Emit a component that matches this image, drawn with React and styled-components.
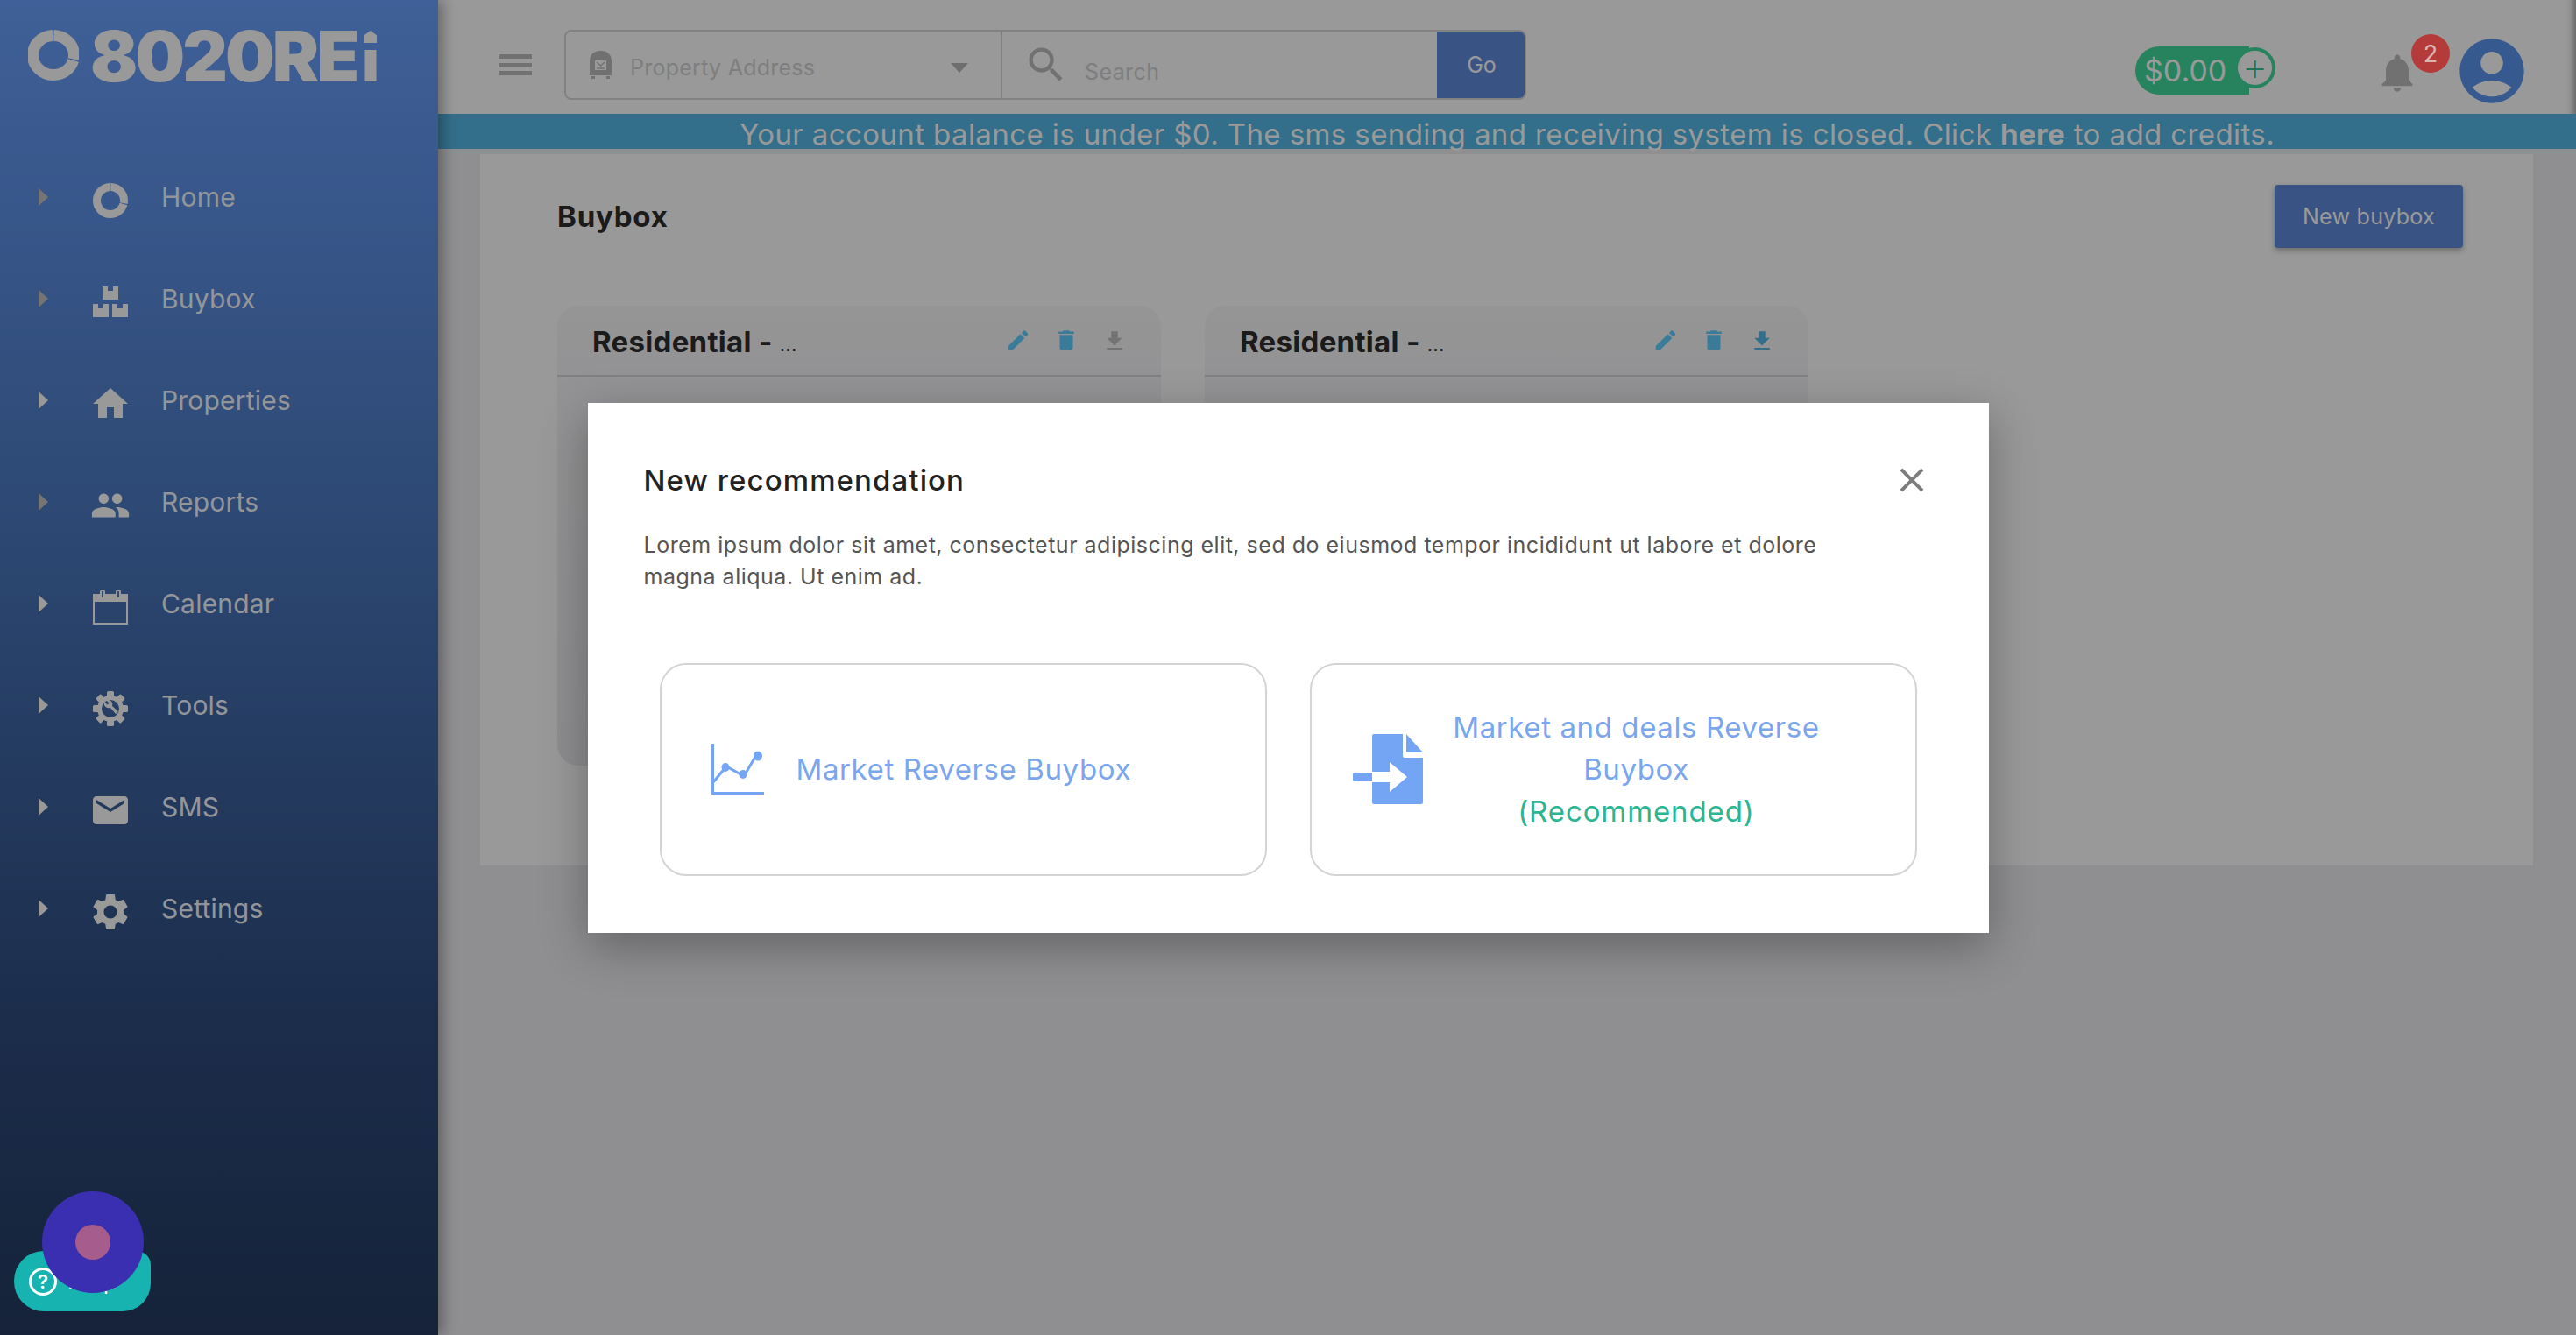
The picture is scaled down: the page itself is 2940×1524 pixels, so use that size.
import React from "react";
import styled, { createGlobalStyle } from "styled-components";
import {
  MdHome, MdPeople, MdEmail, MdSettings, MdEdit, MdDelete, MdFileDownload,
  MdSearch, MdNotifications, MdClose, MdAccountCircle,
} from "react-icons/md";

const FONT = `"Inter", "Noto Sans", "Liberation Sans", sans-serif`;

const Global = createGlobalStyle`
  html, body { margin: 0; padding: 0; height: 100%; overflow: hidden; }
  body { font-family: ${FONT}; background: #eeeef3; }
  * { box-sizing: border-box; }
`;

const Page = styled.div`
  display: flex;
  width: 2940px;
  height: 1524px;
  overflow: hidden;
  position: relative;
`;

const Sidebar = styled.aside`
  flex: 0 0 500px;
  display: flex;
  flex-direction: column;
  background: linear-gradient(180deg, #6aa0fe 0%, #4a78bf 40%, #2f4d80 75%, #243a60 100%);
  box-shadow: 6px 0 14px rgba(0, 0, 0, 0.3);
  position: relative;
  z-index: 2;
`;

const LogoRow = styled.div`
  height: 167px;
  padding: 33px 0 0 32px;
  display: flex;
  align-items: flex-start;
  gap: 13px;
  color: #fff;
`;

const LogoMark = styled.svg`
  width: 58px;
  height: 60px;
  flex: none;
`;

const LogoWord = styled.div`
  font-family: ${FONT};
  font-weight: 900;
  font-size: 80px;
  line-height: 60px;
  letter-spacing: -3px;
  white-space: nowrap;
  height: 60px;
  margin-top: 1px;
  display: flex;
  align-items: baseline;
`;

const LogoI = styled.span`
  position: relative;
  margin-left: 6px;
  font-size: 66px;
  &::before {
    content: "";
    position: absolute;
    left: 2px;
    top: -4px;
    width: 15px;
    height: 14px;
    background: #fff;
    clip-path: polygon(50% 0, 100% 40%, 100% 100%, 0 100%, 0 40%);
  }
`;

const Nav = styled.nav`
  display: flex;
  flex-direction: column;
`;

const NavRow = styled.div`
  height: 116px;
  display: flex;
  align-items: center;
  padding-left: 44px;
  color: #fff;
`;

const Arrow = styled.span`
  width: 0;
  height: 0;
  border-style: solid;
  border-width: 10px 0 10px 11px;
  border-color: transparent transparent transparent ${(p) => (p.$dim ? "#c4c4c4" : "#ffffff")};
  margin-right: 51px;
  flex: none;
`;

const NavIcon = styled.span`
  width: 40px;
  height: 40px;
  margin-top: 8px;
  margin-right: 38px;
  flex: none;
  display: flex;
  align-items: center;
  justify-content: center;
  & svg { display: block; overflow: visible; flex: none; }
`;

const NavLabel = styled.span`
  font-size: 30px;
  font-weight: 400;
  color: #f6f8ff;
  letter-spacing: 0.2px;
`;

const HelpPill = styled.div`
  position: absolute;
  left: 16px;
  top: 1428px;
  width: 156px;
  height: 69px;
  background: #17b3b0;
  border-radius: 34px 16px 32px 34px;
  z-index: 50;
  display: flex;
  align-items: center;
  padding-left: 17px;
  gap: 12px;
  color: #fff;
  font-size: 26px;
`;

const HelpIcon = styled.span`
  width: 32px;
  height: 32px;
  border: 3px solid #fff;
  border-radius: 50%;
  display: flex;
  align-items: center;
  justify-content: center;
  font-size: 22px;
  font-weight: 600;
  line-height: 1;
`;

const Recorder = styled.div`
  position: absolute;
  left: 48px;
  top: 1360px;
  width: 116px;
  height: 116px;
  border-radius: 50%;
  background: #3a2fb0;
  z-index: 51;
  display: flex;
  align-items: center;
  justify-content: center;
  &::after {
    content: "";
    width: 40px;
    height: 40px;
    border-radius: 50%;
    background: #a65c8c;
  }
`;

const Main = styled.main`
  flex: 1;
  display: flex;
  flex-direction: column;
  min-width: 0;
  background: #eeeef3;
`;

const Topbar = styled.header`
  height: 130px;
  flex: none;
  background: #fff;
  display: flex;
  align-items: flex-start;
  padding: 0 60px 0 70px;
  box-shadow: inset -12px 0 10px -10px rgba(0, 0, 0, 0.45);
`;

const Hamburger = styled.div`
  width: 37px;
  height: 24px;
  margin-top: 62px;
  margin-right: 37px;
  display: flex;
  flex-direction: column;
  justify-content: space-between;
  & > i { display: block; height: 5px; background: #bcbcbc; }
`;

const SearchGroup = styled.div`
  width: 1098px;
  height: 80px;
  margin-top: 34px;
  display: flex;
  border: 2px solid #d8d8d8;
  border-radius: 8px;
  overflow: hidden;
`;

const AddressField = styled.div`
  width: 498px;
  display: flex;
  align-items: center;
  padding: 6px 0 0 27px;
  border-right: 2px solid #d8d8d8;
  color: #d2d2d2;
  font-size: 25px;
  letter-spacing: 0.25px;
  gap: 21px;
`;

const Caret = styled.span`
  margin-left: auto;
  margin-right: 37px;
  width: 0;
  height: 0;
  border-style: solid;
  border-width: 11px 10px 0 10px;
  border-color: #b8b8b8 transparent transparent transparent;
`;

const SearchField = styled.div`
  flex: 1;
  display: flex;
  align-items: flex-start;
  color: #d2d2d2;
  font-size: 25px;
  letter-spacing: 0.4px;
  padding-left: 24px;
  & > svg { margin-top: 12px; color: #bcbcbc; flex: none; }
  & > span { margin-top: 31px; margin-left: 18px; }
`;

const GoButton = styled.div`
  width: 102px;
  margin: -2px -2px -2px 0;
  background: #5f8bdc;
  color: #fff;
  font-size: 25px;
  display: flex;
  justify-content: center;
  padding-top: 25px;
`;

const Balance = styled.div`
  margin-left: auto;
  margin-top: 53px;
  width: 160px;
  height: 55px;
  position: relative;
  display: flex;
  color: #fff;
  font-size: 34px;
  align-items: center;
  &::before {
    content: "";
    position: absolute;
    inset: 0 30px 0 0;
    background: #41d99d;
    border-radius: 28px 0 0 28px;
  }
  & > span { position: relative; padding-left: 10px; }
`;

const BalancePlus = styled.div`
  position: absolute;
  right: 0;
  top: 1px;
  width: 47px;
  height: 47px;
  border-radius: 50%;
  background: #fff;
  border: 4px solid #41d99d;
  color: #38c48c;
  display: flex;
  align-items: center;
  justify-content: center;
  font-size: 46px;
  font-weight: 200;
  line-height: 1;
  padding-bottom: 6px;
`;

const Bell = styled.div`
  margin-left: 113px;
  margin-top: 57px;
  width: 52px;
  height: 52px;
  color: #bcbcbc;
  position: relative;
  & svg { display: block; }
`;

const Badge = styled.span`
  position: absolute;
  left: 42px;
  top: -18px;
  width: 44px;
  height: 44px;
  border-radius: 50%;
  background: #b53a3a;
  color: #dcb4b4;
  display: flex;
  align-items: center;
  justify-content: center;
  font-size: 27px;
  z-index: 60;
`;

const Avatar = styled.div`
  margin-left: 38px;
  margin-top: 37px;
  width: 88px;
  height: 88px;
  margin-right: -8px;
  color: #5a96f0;
  & svg { display: block; }
`;

const Banner = styled.div`
  height: 40px;
  flex: none;
  background: #56b8e6;
  color: #fff;
  text-align: center;
  font-size: 33px;
  line-height: 46px;
  white-space: nowrap;
  letter-spacing: 0.4px;
  & b { font-weight: 700; }
`;

const Panel = styled.section`
  margin: 6px 49px 0 48px;
  height: 812px;
  background: #fff;
  padding: 35px 80px 0 88px;
`;

const PanelHead = styled.div`
  display: flex;
  justify-content: space-between;
  align-items: center;
  height: 72px;
  margin-bottom: 66px;
`;

const PanelTitle = styled.h1`
  margin: 0;
  font-size: 33px;
  font-weight: 700;
  letter-spacing: 0.8px;
  color: #2e2e2e;
`;

const PrimaryButton = styled.div`
  width: 215px;
  height: 72px;
  background: #5f8bdc;
  border-radius: 4px;
  color: #fff;
  font-size: 25px;
  letter-spacing: 0.3px;
  display: flex;
  align-items: center;
  justify-content: center;
  box-shadow: 0 3px 6px rgba(0, 0, 0, 0.3);
`;

const CardRow = styled.div`
  display: flex;
  gap: 50px;
`;

const BuyCard = styled.article`
  width: 689px;
  height: 525px;
  border-radius: 24px;
  background: linear-gradient(180deg, #f8f8fa 0%, #ececf0 100%);
`;

const BuyCardHead = styled.div`
  height: 81px;
  display: flex;
  align-items: center;
  padding: 2px 38px 0 40px;
  border-bottom: 2px solid #d6d6d6;
  color: #2e2e2e;
  font-size: 33px;
  font-weight: 700;
  letter-spacing: 0.3px;
  & small { font-size: 20px; font-weight: 600; margin-left: 8px; align-self: flex-end; margin-bottom: 22px; }
`;

const CardActions = styled.div`
  margin-left: auto;
  display: flex;
  gap: 25px;
`;

const ActionIcon = styled.span`
  color: ${(p) => p.$color};
  display: flex;
  width: 30px;
  justify-content: center;
`;

const Scrim = styled.div`
  position: absolute;
  inset: 0;
  background: rgba(0, 0, 0, 0.4);
  z-index: 40;
  display: flex;
  align-items: center;
  justify-content: center;
`;

const Modal = styled.div`
  width: 1599px;
  height: 605px;
  background: #fff;
  padding: 64px 64px 0;
  box-shadow: 0 16px 50px rgba(0, 0, 0, 0.3);
`;

const ModalHead = styled.div`
  display: flex;
  justify-content: space-between;
  align-items: center;
  height: 48px;
`;

const ModalTitle = styled.h2`
  margin: 0;
  font-size: 33px;
  font-weight: 500;
  letter-spacing: 1.1px;
  color: #222;
`;

const CloseButton = styled.span`
  color: #7c7c7c;
  display: flex;
  margin-right: 1px;
`;

const ModalText = styled.p`
  margin: 32px 0 81px;
  font-size: 25px;
  line-height: 36px;
  letter-spacing: 0.5px;
  color: #555;
  width: 1400px;
`;

const ChoiceRow = styled.div`
  display: flex;
  gap: 49px;
  padding-left: 18px;
`;

const Choice = styled.div`
  width: 693px;
  height: 243px;
  border: 2px solid #d4d4d4;
  border-radius: 30px;
  display: flex;
  align-items: center;
  padding-left: ${(p) => p.$pad}px;
  gap: ${(p) => p.$gap}px;
`;

const ChoiceText = styled.div`
  color: #7aa6ee;
  font-size: 33px;
  line-height: 48px;
  letter-spacing: 0.6px;
  text-align: center;
  white-space: nowrap;
  min-width: ${(p) => p.$w || 0}px;
  & > span { display: block; }
`;

const Recommended = styled.span`
  color: #2bb592;
  letter-spacing: 0.9px;
`;

function Ring() {
  return (
    <svg width="40" height="40" viewBox="0 0 40 40">
      <circle cx="20" cy="20" r="15.500" fill="none" stroke="currentColor" strokeWidth="9"
        pathLength="100" strokeDasharray="28 1 70 1" transform="rotate(-89 20 20)" />
    </svg>
  );
}

function Boxes() {
  return (
    <svg width="40" height="36" viewBox="0 0 40 36" fill="currentColor">
      <path d="M11 0h6v5h6V0h6v15H11z" />
      <path d="M0 20h6v5h6v-5h6v15H0z" />
      <path d="M22 20h6v5h6v-5h6v15H22z" />
    </svg>
  );
}

function CalendarIcon() {
  return (
    <svg width="40" height="40" viewBox="0 0 40 40" fill="none">
      <path fillRule="evenodd" clipRule="evenodd" fill="currentColor"
        d="M0 5h8V3a3 3 0 0 1 6 0v2h12V3a3 3 0 0 1 6 0v2h8v35H0zM2 14v24h36V14z" />
      <path d="M11 2v7M29 2v7" stroke="#4f7dc0" strokeWidth="2" />
    </svg>
  );
}

function ToolsIcon() {
  const teeth = [0, 45, 90, 135, 180, 225, 270, 315];
  return (
    <svg width="40" height="40" viewBox="0 0 40 40">
      {teeth.map((a) => (
        <rect key={a} x="16" y="0" width="8" height="8" rx="1.500" fill="currentColor" transform={`rotate(${a} 20 20)`} />
      ))}
      <circle cx="20" cy="20" r="12.500" fill="none" stroke="currentColor" strokeWidth="5" />
      <path d="M13 12a5.500 5.500 0 0 0 7 7l6 7 3-3-7-6a5.500 5.500 0 0 0-7-7l3.500 3.500-2 2z" fill="currentColor" />
    </svg>
  );
}

function MailboxIcon() {
  return (
    <svg width="25" height="32" viewBox="0 0 25 32" style={{ flex: "none", marginTop: -6 }}>
      <path d="M0 12C0 4 5 0 12.500 0S25 4 25 12v16H0z" fill="#bcbcbc" />
      <rect x="6" y="11" width="13" height="11" fill="#fff" />
      <path d="M8 13l4.500 4L17 13M8 20h9" stroke="#bcbcbc" strokeWidth="1.500" fill="none" />
      <rect x="2" y="29" width="4" height="3" fill="#bcbcbc" />
      <rect x="19" y="29" width="4" height="3" fill="#bcbcbc" />
    </svg>
  );
}

function ChartIcon() {
  return (
    <svg width="60" height="58" viewBox="0 0 60 58" fill="none" stroke="#74a4f4" style={{ flex: "none" }}>
      <path d="M1.500 0v56.500h58.500" strokeWidth="3" />
      <path d="M2 44l15-18 20 11 16-27" strokeWidth="3" />
      <g fill="#74a4f4" stroke="none">
        <ellipse cx="16" cy="27" rx="4.500" ry="5" />
        <ellipse cx="36" cy="35" rx="4.500" ry="5" />
        <ellipse cx="53" cy="14" rx="5" ry="5.500" />
      </g>
    </svg>
  );
}

function DocArrowIcon() {
  return (
    <svg width="80" height="80" viewBox="0 0 80 80" style={{ flex: "none" }}>
      <path d="M22 2a2 2 0 0 1 2-2h33v25a2 2 0 0 0 2 2h21v51a2 2 0 0 1-2 2H24a2 2 0 0 1-2-2V55h20v11l20-17-20-17v11H22z" fill="#74a4f4" />
      <path d="M61 0l19 21H61z" fill="#74a4f4" />
      <path d="M2 44h20v10H2a2 2 0 0 1-2-2v-6a2 2 0 0 1 2-2z" fill="#74a4f4" />
    </svg>
  );
}

const NAV = [
  { label: "Home", icon: <Ring />, dim: true },
  { label: "Buybox", icon: <Boxes />, dim: true },
  { label: "Properties", icon: <MdHome size={48} /> },
  { label: "Reports", icon: <MdPeople size={46} />, dim: true },
  { label: "Calendar", icon: <CalendarIcon /> },
  { label: "Tools", icon: <ToolsIcon /> },
  { label: "SMS", icon: <MdEmail size={48} /> },
  { label: "Settings", icon: <MdSettings size={50} /> },
];

function Card({ downloadColor }) {
  return (
    <BuyCard>
      <BuyCardHead>
        Residential - <small>...</small>
        <CardActions>
          <ActionIcon $color="#61cdff"><MdEdit size={31} /></ActionIcon>
          <ActionIcon $color="#61cdff"><MdDelete size={31} /></ActionIcon>
          <ActionIcon $color={downloadColor}><MdFileDownload size={33} /></ActionIcon>
        </CardActions>
      </BuyCardHead>
    </BuyCard>
  );
}

export default function App() {
  return (
    <Page>
      <Global />
      <Sidebar>
        <LogoRow>
          <LogoMark viewBox="0 0 58 60">
            <ellipse cx="29" cy="30" rx="22.500" ry="23.500" fill="none" stroke="#fff" strokeWidth="13"
              pathLength="100" strokeDasharray="28 1 70 1" transform="rotate(-89 29 30)" />
          </LogoMark>
          <LogoWord>8020RE<LogoI>ı</LogoI></LogoWord>
        </LogoRow>
        <Nav>
          {NAV.map((n) => (
            <NavRow key={n.label}>
              <Arrow $dim={n.dim} />
              <NavIcon>{n.icon}</NavIcon>
              <NavLabel>{n.label}</NavLabel>
            </NavRow>
          ))}
        </Nav>
      </Sidebar>
      <Main>
        <Topbar>
          <Hamburger><i /><i /><i /></Hamburger>
          <SearchGroup>
            <AddressField>
              <MailboxIcon />
              Property Address
              <Caret />
            </AddressField>
            <SearchField>
              <MdSearch size={52} />
              <span>Search</span>
            </SearchField>
            <GoButton>Go</GoButton>
          </SearchGroup>
          <Balance>
            <span>$0.00</span>
            <BalancePlus>+</BalancePlus>
          </Balance>
          <Bell>
            <MdNotifications size={52} />
            <Badge>2</Badge>
          </Bell>
          <Avatar><MdAccountCircle size={88} /></Avatar>
        </Topbar>
        <Banner>
          Your account balance is under $0. The sms sending and receiving system is closed. Click <b>here</b> to add credits.
        </Banner>
        <Panel>
          <PanelHead>
            <PanelTitle>Buybox</PanelTitle>
            <PrimaryButton>New buybox</PrimaryButton>
          </PanelHead>
          <CardRow>
            <Card downloadColor="#c0c0c0" />
            <Card downloadColor="#56b8e6" />
          </CardRow>
        </Panel>
      </Main>
      <Scrim>
        <Modal>
          <ModalHead>
            <ModalTitle>New recommendation</ModalTitle>
            <CloseButton><MdClose size={46} /></CloseButton>
          </ModalHead>
          <ModalText>
            Lorem ipsum dolor sit amet, consectetur adipiscing elit, sed do eiusmod tempor incididunt ut labore et dolore
            <br />
            magna aliqua. Ut enim ad.
          </ModalText>
          <ChoiceRow>
            <Choice $pad={57} $gap={37}>
              <ChartIcon />
              <ChoiceText>Market Reverse Buybox</ChoiceText>
            </Choice>
            <Choice $pad={47} $gap={24}>
              <DocArrowIcon />
              <ChoiceText $w={440}>
                <span>Market and deals Reverse</span>
                <span>Buybox</span>
                <Recommended>(Recommended)</Recommended>
              </ChoiceText>
            </Choice>
          </ChoiceRow>
        </Modal>
      </Scrim>
      <HelpPill>
        <HelpIcon>?</HelpIcon>
        Help
      </HelpPill>
      <Recorder />
    </Page>
  );
}
